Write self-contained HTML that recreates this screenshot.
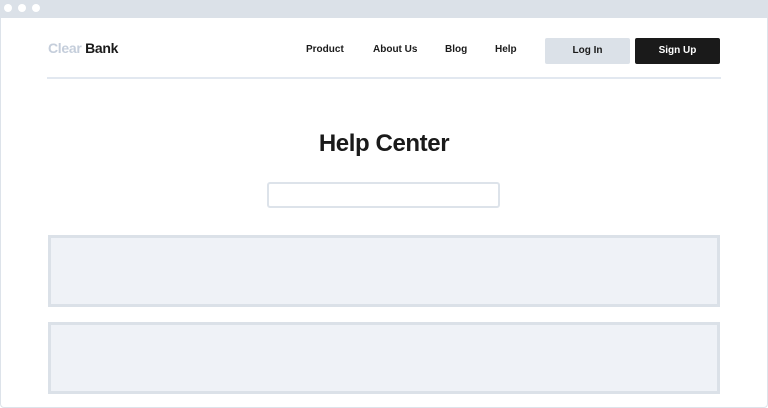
<!DOCTYPE html>
<html><head><style>
*{margin:0;padding:0;box-sizing:border-box}
body{width:768px;height:408px;background:#fff;font-family:"Liberation Sans",Arial,sans-serif;position:relative;overflow:hidden}
.frame{position:absolute;left:0;top:0;width:768px;height:408px;border:1px solid #dde3ea;border-radius:4px}
.bar{position:absolute;left:0;top:0;width:768px;height:18px;background:#dbe1e8}
.dot{position:absolute;top:4px;width:8px;height:8px;border-radius:50%;background:#fff}
.logo{position:absolute;left:48px;top:40px;font-size:14px;font-weight:bold;letter-spacing:-0.3px}
.nav{position:absolute;top:44px;font-size:10px;font-weight:bold;color:#1a1a1a}
.line{position:absolute;left:47px;top:77px;width:674px;height:2px;background:#e2e8f0}
.btn{position:absolute;top:38px;width:85px;height:26px;border-radius:2px;font-size:10px;font-weight:bold;text-align:center;line-height:26px}
h1{position:absolute;left:0;width:768px;top:130px;text-align:center;font-size:24px;font-weight:bold;color:#1a1a1a;letter-spacing:-0.4px}
.search{position:absolute;left:267px;top:182px;width:233px;height:26px;border:2px solid #dde3ea;border-radius:3px}
.box{position:absolute;left:48px;width:672px;height:72px;border:3px solid #dbe1e8;background:#eff2f7}
</style></head><body>
<div class="frame"></div>
<div class="bar"></div>
<div class="dot" style="left:4px"></div><div class="dot" style="left:18px"></div><div class="dot" style="left:32px"></div>
<div class="logo"><span style="color:#c5cedb">Clear</span> <span style="color:#1a1a1a">Bank</span></div>
<div class="nav" style="left:306px">Product</div>
<div class="nav" style="left:373px">About Us</div>
<div class="nav" style="left:445px">Blog</div>
<div class="nav" style="left:495px">Help</div>
<div class="btn" style="left:545px;background:#dbe1e8;color:#1a1a1a">Log In</div>
<div class="btn" style="left:635px;background:#1a1a1a;color:#fff">Sign Up</div>
<div class="line"></div>
<h1>Help Center</h1>
<div class="search"></div>
<div class="box" style="top:235px"></div>
<div class="box" style="top:322px"></div>
</body></html>
